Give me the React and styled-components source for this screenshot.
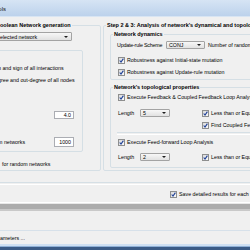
import React from 'react'
import styled, { createGlobalStyle } from 'styled-components'

const GlobalStyle = createGlobalStyle`
  html, body {
    margin: 0;
    padding: 0;
    background: #f0f0f0;
    overflow: hidden;
  }
  body {
    font-family: 'Liberation Sans', Arial, sans-serif;
    font-size: 5.3px;
    color: #000;
  }
`

const Window = styled.div`
  width: 250px;
  height: 250px;
  display: flex;
  flex-direction: column;
  overflow: hidden;
  background: #f0f0f0;
`

const TitleBar = styled.div`
  flex: none;
  height: 17px;
  box-sizing: border-box;
  padding-top: 2px;
  display: flex;
  align-items: center;
  background: linear-gradient(#d6e4f4, #bcd2ec);
  border-bottom: 1px solid #d8e5f3;
`

const Title = styled.div`
  width: 6px;
  overflow: hidden;
  direction: rtl;
  white-space: nowrap;
  font-size: 6px;
  color: #1b1b1b;
`

const Panels = styled.div`
  flex: none;
  display: flex;
  gap: 2px;
  height: 150px;
  margin-top: 4px;
`

const Group = styled.fieldset`
  margin: 0;
  padding: 0;
  min-width: 0;
  box-sizing: border-box;
  border: 1px solid #d5dfe5;
  border-radius: 2px;
  flex: none;
  width: ${p => p.$w}px;
  margin-left: ${p => p.$ml || 0}px;
  margin-top: ${p => p.$mt || 0}px;
  padding-bottom: ${p => p.$pb || 0}px;
`

const Legend = styled.legend`
  padding: 0 1px;
  margin-left: ${p => p.$ml || 2}px;
  font-weight: bold;
  font-size: 5.5px;
  line-height: 8px;
  white-space: nowrap;
`

const Select = styled.div`
  box-sizing: border-box;
  width: ${p => p.$w}px;
  height: ${p => p.$h || 8}px;
  margin-top: ${p => p.$mt || 0}px;
  display: flex;
  align-items: center;
  padding-left: 2px;
  border: 1px solid #a3a3a3;
  border-radius: 1px;
  background: linear-gradient(#f7f7f7, #e1e1e1);
  white-space: nowrap;
  flex: none;
`

const Arrow = styled.span`
  margin-left: auto;
  margin-right: 3px;
  width: 0;
  height: 0;
  border-left: 2px solid transparent;
  border-right: 2px solid transparent;
  border-top: 2px solid #1e1e1e;
`

const InnerBox = styled.div`
  box-sizing: border-box;
  width: 86px;
  height: 102px;
  margin-top: 9px;
  padding-top: 13px;
  padding-right: 8px;
  border: 1px solid #d5dfe5;
  border-radius: 2px;
`

const Row = styled.div`
  display: flex;
  align-items: center;
  height: ${p => p.$h || 8}px;
  line-height: 8px;
  margin-top: ${p => p.$mt || 0}px;
  padding-left: ${p => p.$pl || 0}px;
  white-space: nowrap;
  gap: ${p => p.$gap || 0}px;
`

const Spread = styled(Row)`
  justify-content: space-between;
`

const NumInput = styled.div`
  box-sizing: border-box;
  width: 20px;
  height: ${p => p.$h}px;
  border: 1px solid #abadb3;
  background: #fff;
  text-align: right;
  padding-right: 2px;
  line-height: ${p => p.$h - 2}px;
`

const Label = styled.span`
  width: ${p => (p.$w ? `${p.$w}px` : 'auto')};
  margin-left: ${p => p.$ml || 0}px;
  letter-spacing: ${p => p.$ls || 0}px;
  flex: none;
`

const Tick = styled.span`
  box-sizing: border-box;
  width: 7px;
  height: 7px;
  flex: none;
  display: inline-flex;
  align-items: center;
  justify-content: center;
  border: 1px solid #8e8f8f;
  background: linear-gradient(135deg, #d9d9d9, #fbfbfb);
  svg {
    display: block;
  }
`

const Check = ({ children, mt, pl }) => (
  <Row $mt={mt} $pl={pl} $gap={2}>
    <Tick>
      <svg width="5" height="5" viewBox="0 0 5 5">
        <path d="M0.7 2.5 L2 4 L4.4 0.6" stroke="#1d3f96" strokeWidth="1.1" fill="none" />
      </svg>
    </Tick>
    <span>{children}</span>
  </Row>
)

const LoopBlock = styled.div`
  display: flex;
  align-items: flex-start;
  margin-top: ${p => p.$mt}px;
`

const Options = styled.div`
  display: flex;
  flex-direction: column;
  margin-left: 32px;
`

const Separator = styled.div`
  height: 1px;
  border-top: 1px solid #d5dfe5;
  border-bottom: 1px solid #fff;
  margin-top: ${p => p.$mt}px;
  margin-left: ${p => p.$ml || 0}px;
  flex: none;
`

const Splitter = styled.div`
  flex: none;
  height: 9px;
  margin-top: 4px;
  background: linear-gradient(#ffffff 0 1px, #e8e8e8 1px 2px, #acacac 2px 7px, #c9c9c9 7px);
`

const StatusBar = styled.div`
  flex: none;
  height: 14px;
  box-sizing: border-box;
  margin-top: 19px;
  border-top: 1px solid #d7e1ea;
  display: flex;
  align-items: center;
  padding-top: 1px;
  white-space: nowrap;
`

const Frame = styled.div`
  flex: none;
  height: 7px;
  background: linear-gradient(#cfe0f2 0 2px, #8fb0d6 2px 3px, #3b5b86 3px);
`

export default function App() {
  return (
    <Window>
      <GlobalStyle />
      <TitleBar>
        <Title>Boolean Network Tools</Title>
      </TitleBar>

      <Panels>
        <Group $w={105} $ml={-4}>
          <Legend $ml={2}>oolean Network generation</Legend>
          <Select $w={75} $h={9} $mt={3}>
            elected network
            <Arrow />
          </Select>
          <InnerBox>
            <Row>n and sign of all interactions</Row>
            <Row $mt={4}>gree and out-degree of all nodes</Row>
            <Spread $mt={26} $h={9}>
              <span>r</span>
              <NumInput $h={8}>4.0</NumInput>
            </Spread>
            <Spread $mt={18} $h={10}>
              <span>m networks</span>
              <NumInput $h={10}>1000</NumInput>
            </Spread>
          </InnerBox>
          <Row $mt={8} $pl={5}>for random networks</Row>
        </Group>

        <Group $w={200}>
          <Legend $ml={2}>Step 2 &amp; 3: Analysis of network's dynamical and topological properties</Legend>
          <Group $w={190} $ml={6} $mt={1} $pb={3}>
            <Legend $ml={2}>Network dynamics</Legend>
            <Row $mt={3} $pl={6}>
              <Label $w={49} $ls={-0.18}>Update-rule Scheme</Label>
              <Select $w={39}>
                CONJ
                <Arrow />
              </Select>
              <Label $ml={3}>Number of random states</Label>
            </Row>
            <Check mt={7} pl={7}>Robustness against Initial-state mutation</Check>
            <Check mt={4} pl={7}>Robustness against Update-rule mutation</Check>
          </Group>

          <Group $w={190} $ml={6} $mt={3} $pb={6}>
            <Legend $ml={2}>Network's topological properties</Legend>
            <Check mt={2} pl={7}>Execute Feedback &amp; Coupled Feedback Loop Analysis</Check>
            <LoopBlock $mt={8}>
              <Row $pl={7}>
                <Label $w={22}>Length</Label>
                <Select $w={30}>
                  5
                  <Arrow />
                </Select>
              </Row>
              <Options>
                <Check>Less than or Equal</Check>
                <Check mt={4}>Find Coupled Feedback Loops</Check>
              </Options>
            </LoopBlock>
            <Separator $mt={3} $ml={6} />
            <Check mt={3} pl={7}>Execute Feed-forward Loop Analysis</Check>
            <LoopBlock $mt={7}>
              <Row $pl={7}>
                <Label $w={22}>Length</Label>
                <Select $w={30}>
                  2
                  <Arrow />
                </Select>
              </Row>
              <Options>
                <Check>Less than or Equal</Check>
              </Options>
            </LoopBlock>
          </Group>
        </Group>
      </Panels>

      <Separator $mt={11} />
      <Check mt={5} pl={170}>Save detailed results for each random network</Check>
      <Splitter />
      <StatusBar>ameters ...</StatusBar>
      <Frame />
    </Window>
  )
}
